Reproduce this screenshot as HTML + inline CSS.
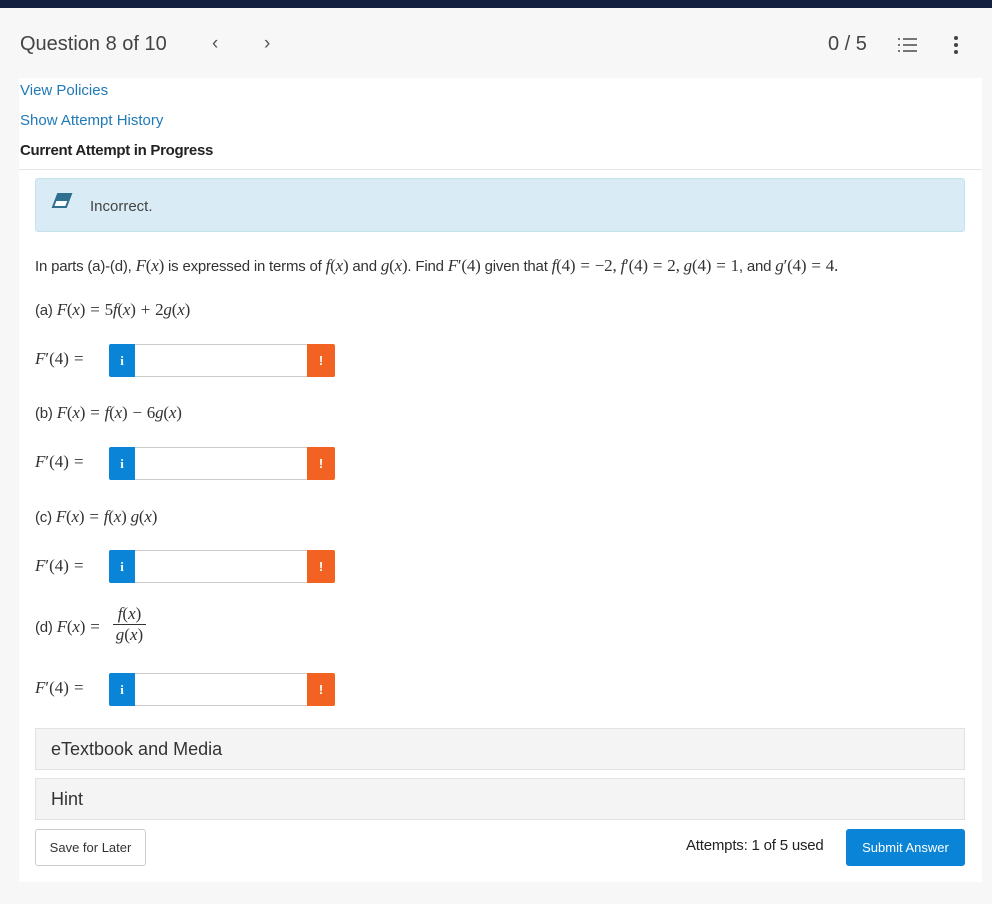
<!DOCTYPE html>
<html><head><meta charset="utf-8"><style>
*{box-sizing:border-box;margin:0;padding:0}
body{width:992px;height:904px;background:#f7f7f7;font-family:"Liberation Sans",sans-serif;color:#333;position:relative;overflow:hidden}
.top{position:absolute;left:0;top:0;width:992px;height:8px;background:#13203f}
.abs{position:absolute}
.panel{position:absolute;left:19px;top:78px;width:963px;height:804px;background:#fff}
.m{font-family:"Liberation Serif",serif;font-size:17px}
.i{font-style:italic}
.o{margin:0 5px}
.t{font-size:15px;color:#333;letter-spacing:-0.2px}
.inp{position:absolute;width:226px;height:33px}
.inp .a{position:absolute;left:0;top:0;width:26px;height:33px;background:#0a84d6;border-radius:2px 0 0 2px;color:#fff;font:bold 13px "Liberation Serif",serif;text-align:center;line-height:33px}
.inp .b{position:absolute;left:26px;top:0;width:174px;height:33px;border:1px solid #ccc;border-left:none;border-right:none;background:#fff}
.inp .c{position:absolute;left:198px;top:0;width:28px;height:33px;background:#f26222;border-radius:0 2px 2px 0;color:#fff;font:bold 13px "Liberation Sans";text-align:center;line-height:33px}
.bar{position:absolute;left:35px;width:930px;height:42px;background:#f4f4f4;border:1px solid #e2e2e2;font-size:18px;color:#333;padding-left:15px;line-height:40px}
</style></head><body>
<div class="top"></div>
<div class="abs" style="left:20px;top:33px;font-size:20px;color:#444">Question 8 of 10</div>
<div class="abs" style="left:212px;top:33px;font-size:19px;color:#555">&#8249;</div>
<div class="abs" style="left:264px;top:33px;font-size:19px;color:#555">&#8250;</div>
<div class="abs" style="left:828px;top:33px;font-size:20px;color:#444">0 / 5</div>
<svg class="abs" style="left:897px;top:36px" width="22" height="18"><g stroke="#555" stroke-width="1.6"><line x1="6" y1="3" x2="20" y2="3"/><line x1="6" y1="9" x2="20" y2="9"/><line x1="6" y1="15" x2="20" y2="15"/><line x1="1" y1="3" x2="3" y2="3"/><line x1="1" y1="9" x2="3" y2="9"/><line x1="1" y1="15" x2="3" y2="15"/></g></svg>
<svg class="abs" style="left:952px;top:35px" width="8" height="20"><g fill="#444"><circle cx="4" cy="3" r="2"/><circle cx="4" cy="10" r="2"/><circle cx="4" cy="17" r="2"/></g></svg>
<div class="panel"></div>
<div class="abs" style="left:20px;top:82px;font-size:15px;color:#1f7ab8">View Policies</div>
<div class="abs" style="left:20px;top:112px;font-size:15px;color:#1f7ab8">Show Attempt History</div>
<div class="abs" style="left:20px;top:142px;font-size:15px;color:#222;font-weight:bold;letter-spacing:-0.3px">Current Attempt in Progress</div>
<div class="abs" style="left:19px;top:169px;width:963px;height:1px;background:#e6e6e6"></div>
<div class="abs" style="left:35px;top:178px;width:930px;height:54px;background:#d9ecf5;border:1px solid #c6e1ee;border-radius:3px"></div>
<svg class="abs" style="left:51px;top:193px" width="22" height="16"><path d="M7 1 H20 L15 14 H2 Z" fill="#fff" stroke="#2f6f8f" stroke-width="2"/><path d="M7 1 H20 L17 8 H4 Z" fill="#2f6f8f"/></svg>
<div class="abs" style="left:90px;top:198px;font-size:15px;color:#444">Incorrect.</div>
<div class="abs t" style="left:35px;top:256px;white-space:nowrap">In parts (a)-(d), <span class="m i">F</span><span class="m">(<i>x</i>)</span> is expressed in terms of <span class="m"><i>f</i>(<i>x</i>)</span> and <span class="m"><i>g</i>(<i>x</i>)</span>. Find <span class="m"><i>F</i>′(4)</span> given that <span class="m"><i>f</i>(4)<span class="o">=</span>−2, <i>f</i>′(4)<span class="o">=</span>2, <i>g</i>(4)<span class="o">=</span>1</span>, and <span class="m"><i>g</i>′(4)<span class="o">=</span>4.</span></div>
<div class="abs t" style="left:35px;top:300px">(a) <span class="m"><i>F</i>(<i>x</i>)<span class="o">=</span>5<i>f</i>(<i>x</i>)<span class="o">+</span>2<i>g</i>(<i>x</i>)</span></div>
<div class="abs m" style="left:35px;top:349px"><i>F</i>′(4)<span class="o">=</span></div>
<div class="inp" style="left:109px;top:344px"><div class="a">i</div><div class="b"></div><div class="c">!</div></div>
<div class="abs t" style="left:35px;top:403px">(b) <span class="m"><i>F</i>(<i>x</i>)<span class="o">=</span><i>f</i>(<i>x</i>)<span class="o">−</span>6<i>g</i>(<i>x</i>)</span></div>
<div class="abs m" style="left:35px;top:452px"><i>F</i>′(4)<span class="o">=</span></div>
<div class="inp" style="left:109px;top:447px"><div class="a">i</div><div class="b"></div><div class="c">!</div></div>
<div class="abs t" style="left:35px;top:507px">(c) <span class="m"><i>F</i>(<i>x</i>)<span class="o">=</span><i>f</i>(<i>x</i>) <i>g</i>(<i>x</i>)</span></div>
<div class="abs m" style="left:35px;top:556px"><i>F</i>′(4)<span class="o">=</span></div>
<div class="inp" style="left:109px;top:550px"><div class="a">i</div><div class="b"></div><div class="c">!</div></div>
<div class="abs t" style="left:35px;top:617px">(d) <span class="m"><i>F</i>(<i>x</i>)<span class="o">=</span></span></div>
<div class="abs m" style="left:113px;top:604px;width:33px;text-align:center;line-height:20px"><div style="border-bottom:1px solid #333"><i>f</i>(<i>x</i>)</div><div><i>g</i>(<i>x</i>)</div></div>
<div class="abs m" style="left:35px;top:678px"><i>F</i>′(4)<span class="o">=</span></div>
<div class="inp" style="left:109px;top:673px"><div class="a">i</div><div class="b"></div><div class="c">!</div></div>
<div class="bar" style="top:728px">eTextbook and Media</div>
<div class="bar" style="top:778px">Hint</div>
<div class="abs" style="left:35px;top:829px;width:111px;height:37px;border:1px solid #ccc;border-radius:3px;font-size:13px;color:#333;text-align:center;line-height:35px">Save for Later</div>
<div class="abs" style="left:686px;top:837px;font-size:15px;color:#222;letter-spacing:-0.2px">Attempts: 1 of 5 used</div>
<div class="abs" style="left:846px;top:829px;width:119px;height:37px;background:#0a84d6;border-radius:3px;font-size:13px;color:#fff;text-align:center;line-height:37px">Submit Answer</div>
</body></html>
